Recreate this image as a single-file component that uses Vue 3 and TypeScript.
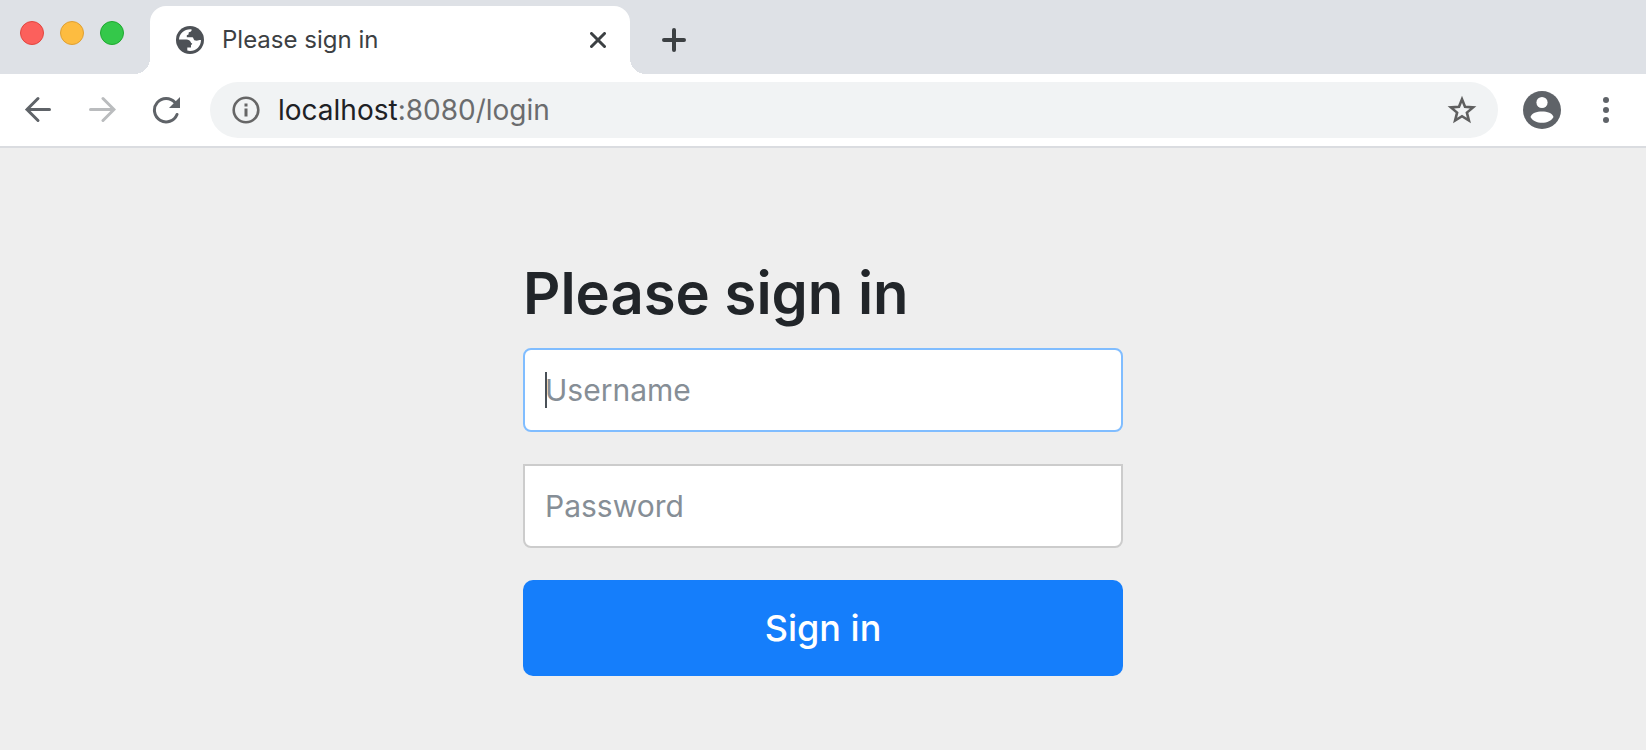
<script setup lang="ts">
import { onMounted, ref } from 'vue'

const username = ref('')
const password = ref('')
const usernameInput = ref<HTMLInputElement | null>(null)
const usernameFocused = ref(true)
const windowButtons = ['Close window', 'Minimize window', 'Zoom window']

onMounted(() => usernameInput.value?.focus())
</script>

<template>
  <div class="browser">
    <header>
      <div class="tab-strip">
        <div class="lights">
          <button v-for="name in windowButtons" :key="name" type="button" class="light" :aria-label="name"></button>
        </div>
        <div class="tab">
          <svg class="globe" viewBox="0 0 28 28" aria-hidden="true">
            <circle cx="14" cy="14" r="14" fill="#4d5156" />
            <path d="M3 13.500C3.200 7.500 8 3.200 14.500 3.200L15.700 3.500C15.700 5.300 14.500 6.300 12.800 6.300L12.500 8.500L10.800 9.300V11.300H16.500C17.500 11.300 17.500 14.600 19.500 14.600C22 15 23 13.800 25 14C25 20.500 20 25 14 25L11.300 24.500V21.500H15V19C15.500 18.500 16.200 18.500 16.200 17.500C14.500 17.500 15 13.500 10.500 13.500Z" fill="#fff" />
          </svg>
          <span class="tab-title">Please sign in</span>
          <button type="button" class="icon-button" aria-label="Close tab">
            <svg width="16" height="16" viewBox="0 0 16 16"><path d="M1.500 1.500l13 13M14.500 1.500l-13 13" class="dark-line" /></svg>
          </button>
        </div>
        <button type="button" class="icon-button new-tab" aria-label="New tab">
          <svg width="24" height="24" viewBox="0 0 24 24"><path d="M12 2v20M2 12h20" class="plus-line" /></svg>
        </button>
      </div>
      <nav class="toolbar" aria-label="Browser toolbar">
        <button type="button" class="icon-button" aria-label="Back">
          <svg width="28" height="28" viewBox="0 0 28 28"><path d="M25.500 13.500H3M14 2.500L3 13.500L14 24.500" class="nav-line" /></svg>
        </button>
        <button type="button" class="icon-button forward" aria-label="Forward" disabled>
          <svg width="28" height="28" viewBox="0 0 28 28"><path d="M2.500 13.500H25M15 2.500L26 13.500L15 24.500" class="nav-line" /></svg>
        </button>
        <button type="button" class="icon-button" aria-label="Reload">
          <svg width="28" height="28" viewBox="0 0 28 28"><path d="M23 6.500A11.700 11.700 0 1 0 25 18.500" class="nav-line" /><path d="M28 1v11H17z" fill="#5f6368" /></svg>
        </button>
        <div class="omnibox">
          <button type="button" class="icon-button" aria-label="View site information">
            <svg width="28" height="28" viewBox="0 0 28 28"><circle cx="14" cy="14" r="12.300" fill="none" stroke="#666" stroke-width="2.600" /><path d="M12.500 7.500h3v3h-3zM12.500 12.500h3v8h-3z" fill="#666" /></svg>
          </button>
          <span class="address"><span class="host">localhost</span>:8080/login</span>
          <button type="button" class="icon-button" aria-label="Bookmark this page">
            <svg width="30" height="30" viewBox="0 0 30 30"><path d="M15 4.300L18 11.800L26.100 12.400L19.900 17.600L21.900 25.500L15 21.200L8.100 25.500L10.100 17.600L3.900 12.400L12 11.800Z" fill="none" stroke="#5f5f5f" stroke-width="2.600" /></svg>
          </button>
        </div>
        <button type="button" class="icon-button" aria-label="Profile">
          <svg width="38" height="38" viewBox="0 0 38 38"><circle cx="19" cy="19" r="19" fill="#5f6368" /><circle cx="19" cy="11.500" r="5.600" fill="#fff" /><path d="M7.500 26C9.500 18.800 28.500 18.800 30.500 26C27 33.700 11 33.700 7.500 26Z" fill="#fff" /></svg>
        </button>
        <button type="button" class="icon-button menu" aria-label="Browser menu">
          <svg width="6" height="26" viewBox="0 0 6 26" fill="#5f6368"><circle cx="3" cy="3" r="3" /><circle cx="3" cy="13" r="3" /><circle cx="3" cy="23" r="3" /></svg>
        </button>
      </nav>
    </header>
    <main>
      <form class="sign-in" @submit.prevent>
        <h2>Please sign in</h2>
        <div class="control" :class="{ 'with-caret': usernameFocused && !username }">
          <input
            ref="usernameInput"
            v-model="username"
            class="field"
            type="text"
            placeholder="Username"
            aria-label="Username"
            autocomplete="username"
            required
            @focus="usernameFocused = true"
            @blur="usernameFocused = false"
          />
        </div>
        <div class="control">
          <input v-model="password" class="field password" type="password" placeholder="Password" aria-label="Password" autocomplete="current-password" required />
        </div>
        <button type="submit" class="submit">Sign in</button>
      </form>
    </main>
  </div>
</template>

<style>
body {
  margin: 0;
  background: #eee;
}
</style>

<style scoped>
.browser {
  min-height: 100vh;
  box-sizing: border-box;
  background: #eee;
  color: #212529;
  font-family: Inter, "Liberation Sans", sans-serif;
}
button {
  font-family: inherit;
}
svg {
  display: block;
}
.tab-strip {
  display: flex;
  height: 74px;
  background: #dee1e6;
}
.lights {
  display: flex;
  gap: 16px;
  padding: 21px 26px 0 20px;
}
.light {
  width: 24px;
  height: 24px;
  padding: 0;
  border: 1px solid #e2463f;
  border-radius: 50%;
  background: #fc605c;
}
.light:nth-child(2) {
  border-color: #dfa033;
  background: #fdbc40;
}
.light:nth-child(3) {
  border-color: #1fa930;
  background: #34c84a;
}
.tab {
  position: relative;
  display: flex;
  align-items: center;
  box-sizing: border-box;
  width: 480px;
  height: 68px;
  margin-top: 6px;
  padding: 0 24px 0 26px;
  border-radius: 16px 16px 0 0;
  background: #fff;
}
.tab::before,
.tab::after {
  content: "";
  position: absolute;
  bottom: 0;
  width: 16px;
  height: 16px;
}
.tab::before {
  right: 100%;
  background: radial-gradient(circle at 0 0, transparent 16px, #fff 16px);
}
.tab::after {
  left: 100%;
  background: radial-gradient(circle at 100% 0, transparent 16px, #fff 16px);
}
.globe {
  width: 28px;
  height: 28px;
}
.tab-title {
  flex: 1;
  margin-left: 18px;
  color: #3c4043;
  font-size: 24px;
  line-height: 32px;
}
.icon-button {
  display: flex;
  flex: none;
  align-items: center;
  justify-content: center;
  padding: 0;
  border: 0;
  background: transparent;
}
.new-tab {
  margin: 6px 0 0 32px;
}
.dark-line,
.plus-line,
.nav-line {
  fill: none;
  stroke: #3c4043;
  stroke-width: 3;
  stroke-linecap: round;
}
.plus-line {
  stroke-width: 4;
}
.nav-line {
  stroke: #5f6368;
}
.forward .nav-line {
  stroke: #babcbe;
}
.toolbar {
  display: flex;
  align-items: center;
  gap: 36px;
  padding: 8px 37px 8px 24px;
  border-bottom: 2px solid #dadce0;
  background: #fff;
}
.omnibox {
  display: flex;
  flex: 1;
  align-items: center;
  height: 56px;
  box-sizing: border-box;
  margin: 0 -11px 0 -6px;
  padding: 0 21px 0 22px;
  border-radius: 28px;
  background: #f1f3f4;
}
.menu {
  margin-left: 6px;
}
.address {
  flex: 1;
  margin-left: 18px;
  color: #6b6c6e;
  font-size: 28px;
  line-height: 36px;
}
.host {
  color: #202124;
}
main {
  padding: 107px 30px 32px;
}
.sign-in {
  display: flex;
  flex-direction: column;
  gap: 32px;
  max-width: 600px;
  margin: 0 auto;
}
h2 {
  margin: 0 0 -16px;
  font-size: 58px;
  font-weight: 600;
  line-height: 77px;
}
.control {
  position: relative;
  display: flex;
}
.with-caret::before {
  content: "";
  position: absolute;
  top: 24px;
  left: 22px;
  width: 2px;
  height: 36px;
  background: #495057;
}
.with-caret .field {
  caret-color: transparent;
}
.field {
  box-sizing: border-box;
  width: 100%;
  height: 84px;
  padding: 0 20px;
  border: 2px solid #ccc;
  border-radius: 8px;
  background: #fff;
  color: #495057;
  font-family: inherit;
  font-size: 30px;
}
.field:focus {
  outline: 0;
  border-color: #80bdff;
}
.field::placeholder {
  color: #868e96;
  opacity: 1;
}
.password {
  border-radius: 0 0 8px 8px;
}
.submit {
  height: 96px;
  border: 0;
  border-radius: 10px;
  background: #157efb;
  color: #fff;
  font-size: 36px;
  font-weight: 500;
}
</style>
